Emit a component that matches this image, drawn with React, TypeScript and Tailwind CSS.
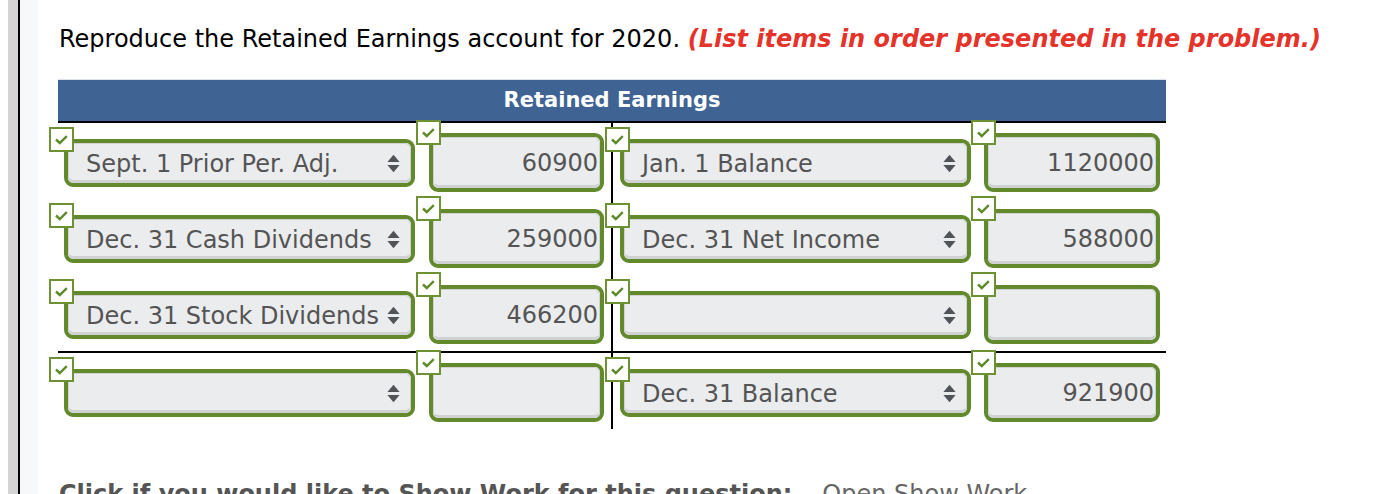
import React from 'react'

interface Entry {
  label: string
  amount: string
}

interface RowData {
  debit: Entry
  credit: Entry
}

const rows: RowData[] = [
  { debit: { label: 'Sept. 1 Prior Per. Adj.', amount: '60900' }, credit: { label: 'Jan. 1 Balance', amount: '1120000' } },
  { debit: { label: 'Dec. 31 Cash Dividends', amount: '259000' }, credit: { label: 'Dec. 31 Net Income', amount: '588000' } },
  { debit: { label: 'Dec. 31 Stock Dividends', amount: '466200' }, credit: { label: '', amount: '' } },
]

const totalRow: RowData = {
  debit: { label: '', amount: '' },
  credit: { label: 'Dec. 31 Balance', amount: '921900' },
}

function CheckMark({ className }: { className: string }) {
  return (
    <div className={`absolute h-[25px] w-[25px] border-2 border-[#6d9133] bg-white ${className}`}>
      <svg viewBox="0 0 21 21" className="h-full w-full">
        <path d="M5 10.5 L8.8 14 L15.8 7.2" fill="none" stroke="#5f8a2a" strokeWidth="2.4" />
      </svg>
    </div>
  )
}

function Arrows() {
  return (
    <svg viewBox="0 0 12 18" className="h-[19px] w-[13px] shrink-0">
      <path d="M6 0.8 L11.8 7.6 L0.2 7.6 Z" fill="#505459" />
      <path d="M0.2 10.4 L11.8 10.4 L6 17.2 Z" fill="#505459" />
    </svg>
  )
}

function SelectField({ label }: { label: string }) {
  return (
    <div className="relative mt-[6px] h-[48px] w-[351px] shrink-0">
      <CheckMark className="-left-[15px] -top-[12px]" />
      <div className="h-full w-full rounded-[9px] border-4 border-[#628a2c] bg-[#f4f4f5]">
        <div className="flex h-full items-center rounded-[6px] border border-b-[3px] border-[#d0d1d3] bg-[#ebecee] pl-[17px] pr-[10px] pt-[3px] text-[24px] text-[#545454]">
          <span className="flex-1 whitespace-nowrap leading-none">{label}</span>
          <Arrows />
        </div>
      </div>
    </div>
  )
}

function AmountField({ value, width }: { value: string; width: string }) {
  return (
    <div className={`relative h-[59px] shrink-0 ${width}`}>
      <CheckMark className="-left-[13px] -top-[13px]" />
      <div className="h-full w-full rounded-[9px] border-4 border-[#628a2c] bg-[#f4f4f5]">
        <div className="flex h-full items-center justify-end rounded-[6px] border border-b-[3px] border-[#d0d1d3] bg-[#ebecee] pr-[1px] pt-[3px] text-[24px] text-[#545454]">
          <span className="leading-none">{value}</span>
        </div>
      </div>
    </div>
  )
}

function LedgerRow({ row }: { row: RowData }) {
  return (
    <div className="flex h-[76px]">
      <div className="flex w-[555px] shrink-0 items-start gap-[14px] border-r-2 border-black pl-[6px] pt-[10px]">
        <SelectField label={row.debit.label} />
        <AmountField value={row.debit.amount} width="w-[175px]" />
      </div>
      <div className="flex flex-1 items-start gap-[13px] pl-[7px] pt-[10px]">
        <SelectField label={row.credit.label} />
        <AmountField value={row.credit.amount} width="w-[176px]" />
      </div>
    </div>
  )
}

export default function App() {
  return (
    <div className="flex h-[494px] overflow-hidden bg-white font-['DejaVu_Sans',sans-serif]">
      {/* left gutter */}
      <div className="w-[8px] shrink-0 bg-white" />
      <div className="w-[10px] shrink-0 bg-[#d4d4d4]" />
      <div className="w-[2px] shrink-0 bg-black" />
      <div className="w-[18px] shrink-0 bg-[#f7f8fa]" />

      <div className="flex-1 pl-[21px] pt-[25px]">
        <p className="whitespace-nowrap text-[24px] leading-[28px] text-black">
          Reproduce the Retained Earnings account for 2020.{' '}
          <span className="font-bold italic text-[#e6332a]">(List items in order presented in the problem.)</span>
        </p>

        <div className="mt-[26px] w-[1108px] -ml-px">
          <div className="flex h-[44px] items-center justify-center border-t border-b-2 border-t-[#dde3ea] border-b-black bg-[#3f6494] pt-px text-[21px] font-bold text-white">
            Retained Earnings
          </div>
          {rows.map((row, i) => (
            <LedgerRow key={i} row={row} />
          ))}
          <div className="h-[2px] bg-black" />
          <LedgerRow row={totalRow} />
        </div>

        <div className="mt-[51px] flex gap-[30px] whitespace-nowrap text-[24px] leading-[28px]">
          <span className="font-bold text-[#555]">Click if you would like to Show Work for this question:</span>
          <span className="text-[#666]">Open Show Work</span>
        </div>
      </div>
    </div>
  )
}
